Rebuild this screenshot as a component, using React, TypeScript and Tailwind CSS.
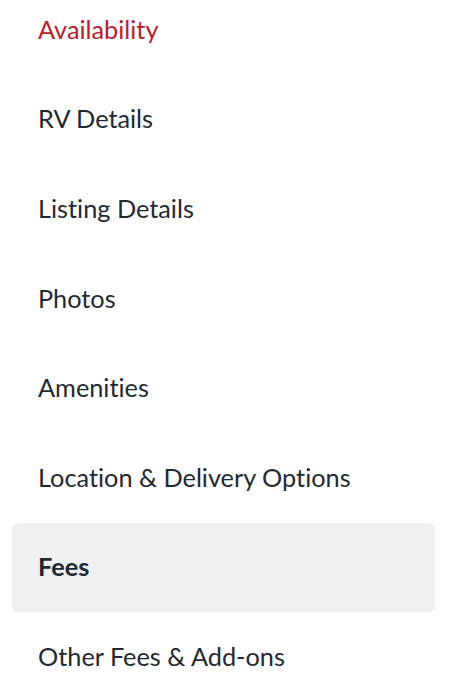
import React from "react";

const items = [
  "Availability",
  "RV Details",
  "Listing Details",
  "Photos",
  "Amenities",
  "Location & Delivery Options",
  "Fees",
  "Other Fees & Add-ons",
];

export default function App() {
  return (
    <div className="w-[452px] h-[698px] overflow-hidden bg-white [font-variant-ligatures:none]" style={{ fontFamily: "Lato, 'Noto Sans', sans-serif" }}>
      <ul className="mt-[-15px] ml-[12px] w-[423px] flex flex-col">
        {items.map((it, i) => {
          const active = i === 6;
          const red = i === 0;
          return (
            <li
              key={it}
              className={`h-[89.6px] flex items-center pl-[26px] rounded-[6px] text-[25.3px] ${
                active ? "bg-[#eef0f2] font-bold text-[#1f2933]" : red ? "text-[#b3222f]" : "text-[#1f2933]"
              }`}
            >
              {it}
            </li>
          );
        })}
      </ul>
    </div>
  );
}
